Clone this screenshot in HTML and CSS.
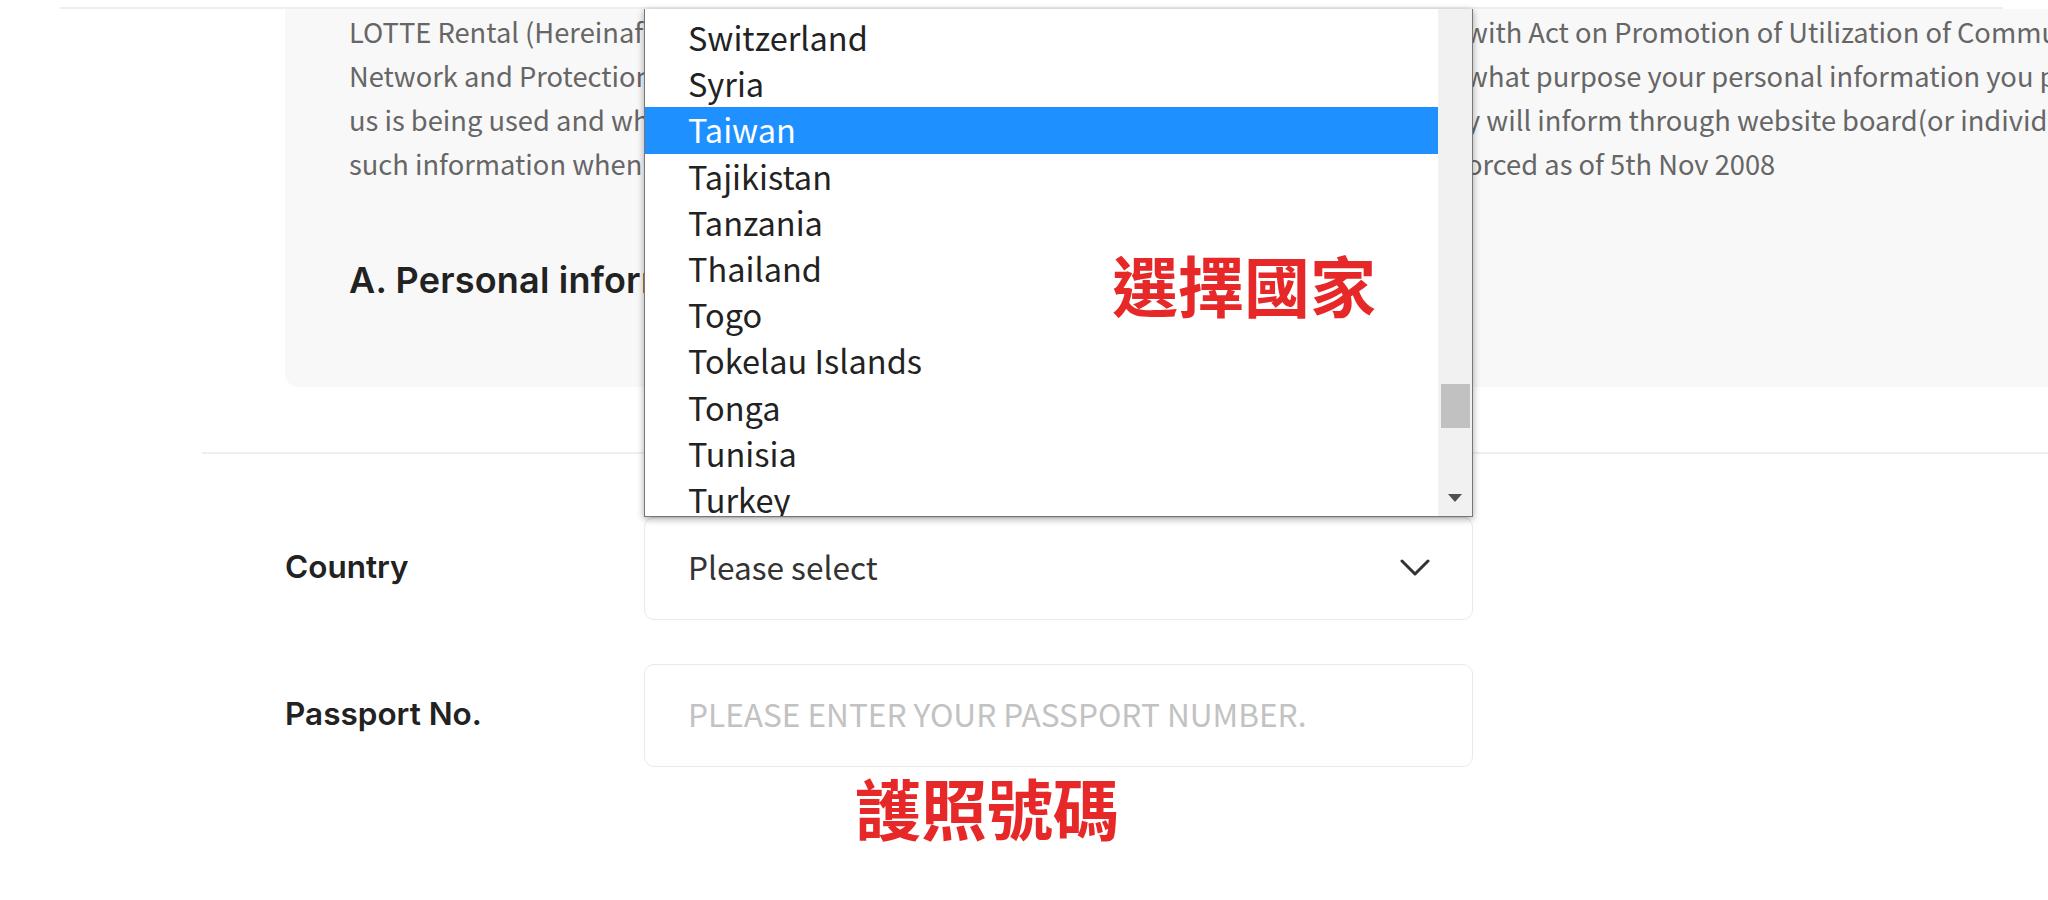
FILE: index.html
```html
<!DOCTYPE html>
<html lang="en">
<head>
<meta charset="utf-8">
<title>LOTTE Rental - Privacy</title>
<link rel="stylesheet" href="styles.css">
</head>
<body>
<div class="page">
  <div class="topline"></div>

  <section class="terms">
    <div class="terms-text">
      <p class="line"><span class="lead">LOTTE Rental (Hereinafter referred to as "Company") values your personal information and complies </span><span class="tail">with Act on Promotion of Utilization of Communications Network</span></p>
      <p class="line"><span class="lead">Network and Protection of Information. The Company informs you of for </span><span class="tail">what purpose your personal information you provide to</span></p>
      <p class="line"><span class="lead">us is being used and what measures are taken to protect it. If the policy changes, the compan</span><span class="tail">y will inform through website board(or individual notice)</span></p>
      <p class="line"><span class="lead">such information when the policy is revised. This privacy policy is enf</span><span class="tail">orced as of 5th Nov 2008</span></p>
    </div>
    <h3 class="terms-title">A. Personal information items collected</h3>
  </section>

  <hr class="divider">

  <form class="form">
    <label class="label">Country</label>
    <div class="select">
      <span class="select-value">Please select</span>
      <svg class="chevron" width="30" height="17" viewBox="0 0 30 17"><path d="M2 2 L15 15 L28 2" fill="none" stroke="#333" stroke-width="3" stroke-linecap="round" stroke-linejoin="round"/></svg>
    </div>

    <label class="label">Passport No.</label>
    <div class="field">
      <input class="input" type="text" placeholder="PLEASE ENTER YOUR PASSPORT NUMBER.">
    </div>

    <div class="note">護照號碼</div>
  </form>

  <div class="dropdown">
    <ul class="options">
      <li>Switzerland</li>
      <li>Syria</li>
      <li class="active">Taiwan</li>
      <li>Tajikistan</li>
      <li>Tanzania</li>
      <li>Thailand</li>
      <li>Togo</li>
      <li>Tokelau Islands</li>
      <li>Tonga</li>
      <li>Tunisia</li>
      <li>Turkey</li>
    </ul>
    <div class="scrollbar">
      <div class="thumb"></div>
      <div class="arrow"></div>
    </div>
  </div>

  <div class="callout">選擇國家</div>
</div>
</body>
</html>
```

FILE: styles.css
```css
html, body {
  margin: 0;
  padding: 0;
  background: #ffffff;
}

body {
  width: 2048px;
  height: 900px;
  overflow: hidden;
  font-family: "Noto Sans CJK KR", "Noto Sans CJK TC", "Noto Sans", sans-serif;
}

.page {
  position: relative;
  width: 2048px;
  height: 900px;
  overflow: hidden;
}

.topline {
  height: 7px;
  margin: 0 45px 0 60px;
  border-bottom: 2px solid #efefef;
}

.terms {
  margin-left: 285px;
  width: 1900px;
  background: #f8f8f8;
  border-bottom-left-radius: 14px;
  padding: 0 0 87px 64px;
  box-sizing: border-box;
}

.terms-text {
  margin: 0;
}

.line {
  display: flex;
  margin: 0;
  font-size: 27.3px;
  line-height: 44px;
  color: #666666;
  white-space: nowrap;
}

.lead {
  flex: 0 0 1117px;
  overflow: hidden;
}

.tail {
  flex: none;
}

.terms-title {
  margin: 75px 0 0;
  font-family: "Inter", "Noto Sans", sans-serif;
  font-weight: 600;
  font-size: 36px;
  line-height: 40px;
  letter-spacing: 0.2px;
  color: #222222;
  white-space: nowrap;
}

.divider {
  margin: 65px 0 0 202px;
  border: 0;
  border-top: 2px solid #eeeeee;
  height: 0;
}

.form {
  display: grid;
  grid-template-columns: 359px 829px;
  grid-auto-rows: auto;
  row-gap: 44px;
  margin: 63px 0 0 285px;
}

.label {
  display: flex;
  align-items: center;
  padding-bottom: 4px;
  font-family: "Inter", "Noto Sans", sans-serif;
  font-weight: 600;
  font-size: 31.5px;
  letter-spacing: 0;
  color: #222222;
}

.select,
.field {
  height: 103px;
  box-sizing: border-box;
  border: 1px solid #e9e9e9;
  border-radius: 10px;
  background: #ffffff;
  display: flex;
  align-items: center;
  padding: 0 42px 5px 43px;
}

.select-value {
  flex: 1;
  font-size: 31.6px;
  color: #333333;
}

.chevron {
  display: block;
  flex: none;
  margin-top: 3px;
}

.input {
  width: 100%;
  border: 0;
  outline: none;
  padding: 0;
  background: transparent;
  font-family: "Noto Sans CJK KR", "Noto Sans", sans-serif;
  font-size: 31.6px;
  color: #333333;
}

.input::placeholder {
  color: #c2c2c2;
}

.note {
  grid-column: 2;
  margin-top: -38px;
  padding-left: 211px;
  font-family: "Noto Sans CJK TC", sans-serif;
  font-weight: 700;
  font-size: 66px;
  line-height: 66px;
  color: #e62828;
}

.dropdown {
  position: absolute;
  left: 644px;
  top: 9px;
  width: 829px;
  height: 508px;
  box-sizing: border-box;
  border: 1px solid #777777;
  border-top: 0;
  background: #ffffff;
  box-shadow: 0 2px 7px rgba(0, 0, 0, 0.35);
  display: flex;
  overflow: hidden;
}

.options {
  flex: 1;
  list-style: none;
  margin: 0;
  padding: 6px 0 0;
}

.options li {
  height: 46.2px;
  line-height: 44.2px;
  padding-left: 43px;
  font-size: 32.5px;
  color: #222222;
  white-space: nowrap;
}

.options li.active {
  background: #1e90ff;
  color: #ffffff;
}

.scrollbar {
  flex: 0 0 34px;
  background: #f1f1f1;
  display: flex;
  flex-direction: column;
  align-items: center;
  padding-top: 375px;
  box-sizing: border-box;
}

.thumb {
  width: 29px;
  height: 44px;
  background: #c1c1c1;
}

.arrow {
  margin-top: auto;
  margin-bottom: 14px;
  width: 0;
  height: 0;
  border-left: 7px solid transparent;
  border-right: 7px solid transparent;
  border-top: 8px solid #505050;
}

.callout {
  position: absolute;
  left: 1112px;
  top: 250px;
  font-family: "Noto Sans CJK TC", sans-serif;
  font-weight: 700;
  font-size: 66px;
  line-height: 66px;
  color: #e62828;
  white-space: nowrap;
}
```
